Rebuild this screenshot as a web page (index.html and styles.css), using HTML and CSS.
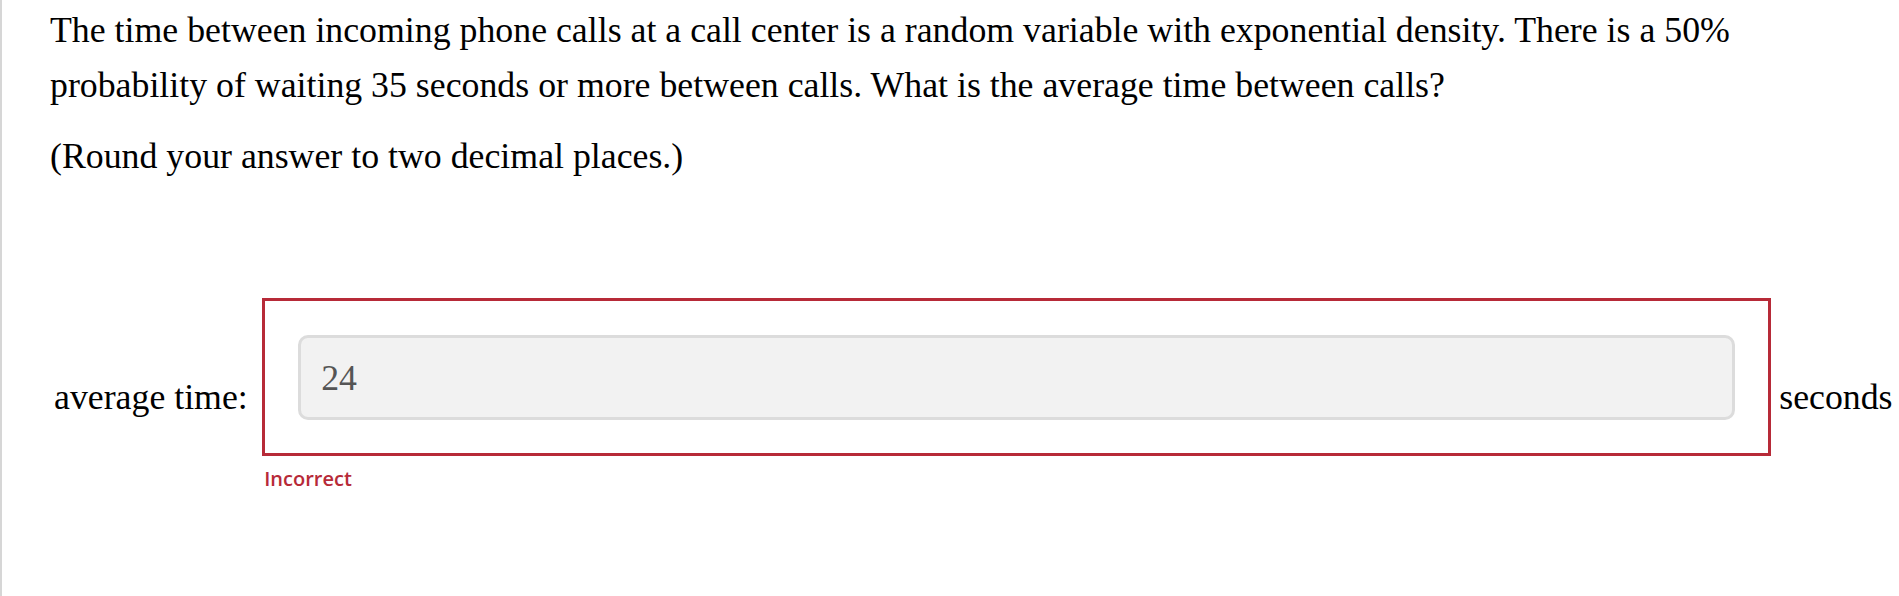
FILE: index.html
```html
<!DOCTYPE html>
<html lang="en">
<head>
    <meta charset="UTF-8">
    <link rel="stylesheet" href="styles.css">
</head>
<body>

    <div class="question">
        <p class="text">
            The time between incoming phone calls at a call center is a random variable with exponential density. There is a 50% probability of waiting 35 seconds or more between calls. What is the average time between calls?
        </p>
        <p class="text">(Round your answer to two decimal places.)</p>

        <div class="answer-row">
            <span class="label">average time:</span>
            <div class="answer-box">
                <input class="answer-input" type="text" value="24" readonly>
            </div>
            <span class="unit">seconds</span>
            <span class="feedback">Incorrect</span>
        </div>
    </div>

</body>
</html>
```

FILE: styles.css
```css
html, body {
    margin: 0;
    background: #fff;
}
.question {
    box-sizing: border-box;
    height: 596px;
    padding: 3px 0 0 48px;
    border-left: 2px solid #d6d6d6;
    font-family: "Liberation Serif", "Times New Roman", serif;
    font-size: 35.8px;
    line-height: 55px;
    color: #000;
}
.text {
    max-width: 1780px;
    margin: 0 0 16px 0;
}
/* answer */
.answer-row {
    display: grid;
    grid-template-columns: auto 1509px auto;
    column-gap: 8px;
    align-items: center;
    margin: 114px 0 0 4px;
}
.label,
.unit {
    padding-top: 40px;
    white-space: nowrap;
}
.answer-box {
    box-sizing: border-box;
    height: 158px;
    padding: 34px 33px;
    border: 3px solid #b72a38;
}
.answer-input {
    box-sizing: border-box;
    width: 100%;
    height: 85px;
    padding: 0 20px;
    border: 3px solid #dcdcdc;
    border-radius: 10px;
    background: #f2f2f2;
    font-family: "Liberation Serif", "Times New Roman", serif;
    font-size: 35.8px;
    color: #555;
    outline: none;
}
.feedback {
    grid-column: 2;
    margin: 10px 0 0 2px;
    font-family: "Open Sans", Lato, sans-serif;
    font-weight: 600;
    font-size: 20px;
    line-height: 26px;
    color: #b72a38;
}
```
